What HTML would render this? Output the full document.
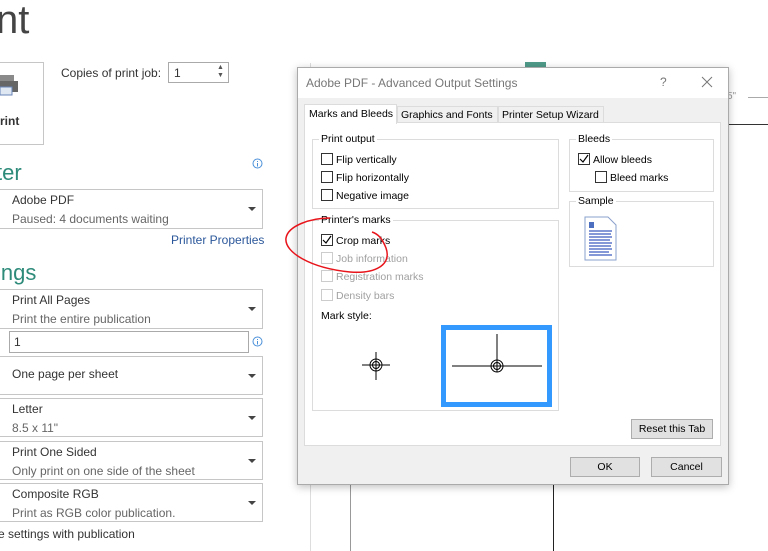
<!DOCTYPE html>
<html><head><style>
*{box-sizing:border-box;margin:0;padding:0}
body{width:768px;height:551px;overflow:hidden;background:#fff;font-family:"Liberation Sans",sans-serif;font-size:12px;color:#333;position:relative}
.a{position:absolute}
.dd{position:absolute;left:-2px;width:265px;border:1px solid #c6c6c6;background:#fff}
.dd .t{position:absolute;left:13px;font-size:12px;color:#333}
.dd .s{color:#666}
.dd .ar{position:absolute;right:6px;top:50%;margin-top:-2px;border-left:4px solid transparent;border-right:4px solid transparent;border-top:4px solid #444}
.teal{color:#2e8b7a;font-size:22px}
.dlg{position:absolute;left:297px;top:67px;width:432px;height:418px;background:#f0f0f0;border:1px solid #aaa;box-shadow:0 2px 8px rgba(0,0,0,.25);font-size:10.5px;color:#000}
.dlg div{white-space:nowrap}
.gb{position:absolute;border:1px solid #dcdcdc}
.gb .lg{position:absolute;top:-7px;left:6px;background:#fff;padding:0 2px;font-size:10.5px}
.cb{position:absolute;left:8px;font-size:10.5px;white-space:nowrap}
.cb i{display:inline-block;width:12px;height:12px;border:1px solid #333;background:#fff;vertical-align:-2px;margin-right:3px;position:relative}
.cb.dis{color:#a0a0a0}.cb.dis i{border-color:#ccc}
.btn{position:absolute;border:1px solid #adadad;background:#e1e1e1;text-align:center;font-size:10.5px;line-height:18px}
</style></head><body>
<div class="a" style="left:310px;top:63px;width:1px;height:488px;background:#ddd"></div>
<div class="a" style="left:350px;top:484px;width:1px;height:67px;background:#999"></div>
<div class="a" style="left:553px;top:484px;width:1px;height:67px;background:#222"></div>
<div class="a" style="left:728px;top:124px;width:40px;height:1px;background:#333"></div>
<div class="a" style="left:748px;top:97px;width:20px;height:1px;background:#aaa"></div>
<div class="a" style="left:727px;top:91px;font-size:10px;color:#999">5"</div>
<div class="a" style="left:525px;top:62px;width:21px;height:6px;background:#4f9a8a"></div>

<div class="a" style="left:-4px;top:-2px;font-size:40px;color:#444">nt</div>
<div class="a" style="left:-2px;top:62px;width:46px;height:83px;border:1px solid #c6c6c6;background:#fff"></div>
<svg class="a" style="left:0;top:72px" width="20" height="30"><rect x="0" y="3" width="14" height="6" fill="#8a8a8a"/><rect x="0" y="9" width="18" height="11" fill="#666"/><rect x="0" y="15" width="12" height="8" fill="#dfe7f2" stroke="#6a86b8"/></svg>
<div class="a" style="left:0;top:114px;font-size:12px;font-weight:bold">rint</div>
<div class="a" style="left:61px;top:66px;font-size:12px">Copies of print job:</div>
<div class="a" style="left:168px;top:62px;width:61px;height:21px;border:1px solid #aaa;background:#fff;font-size:12px;padding:3px 5px">1</div>
<div class="a" style="left:217px;top:64px;font-size:7px;color:#555;line-height:8px">▲<br>▼</div>
<div class="a teal" style="left:-4px;top:160px">ter</div>
<svg class="a" style="left:252px;top:158px" width="11" height="11"><circle cx="5.5" cy="5.5" r="4.5" fill="none" stroke="#4a90d9"/><rect x="5" y="5" width="1" height="3.5" fill="#4a90d9"/><rect x="5" y="3" width="1" height="1" fill="#4a90d9"/></svg>
<div class="dd" style="top:189px;height:40px"><div class="t" style="top:3px">Adobe PDF</div><div class="t s" style="top:22px">Paused: 4 documents waiting</div><div class="ar"></div></div>
<div class="a" style="left:171px;top:233px;color:#2b579a;font-size:12px">Printer Properties</div>
<div class="a teal" style="left:-4px;top:260px">ings</div>
<div class="dd" style="top:289px;height:40px"><div class="t" style="top:3px">Print All Pages</div><div class="t s" style="top:22px">Print the entire publication</div><div class="ar"></div></div>
<div class="a" style="left:9px;top:331px;width:240px;height:22px;border:1px solid #aaa;background:#fff;padding:3px 4px">1</div>
<svg class="a" style="left:252px;top:336px" width="11" height="11"><circle cx="5.5" cy="5.5" r="4.5" fill="none" stroke="#4a90d9"/><rect x="5" y="5" width="1" height="3.5" fill="#4a90d9"/><rect x="5" y="3" width="1" height="1" fill="#4a90d9"/></svg>
<div class="dd" style="top:356px;height:39px"><div class="t" style="top:10px">One page per sheet</div><div class="ar"></div></div>
<div class="dd" style="top:398px;height:39px"><div class="t" style="top:3px">Letter</div><div class="t s" style="top:22px">8.5 x 11"</div><div class="ar"></div></div>
<div class="dd" style="top:441px;height:39px"><div class="t" style="top:3px">Print One Sided</div><div class="t s" style="top:22px">Only print on one side of the sheet</div><div class="ar"></div></div>
<div class="dd" style="top:483px;height:39px"><div class="t" style="top:3px">Composite RGB</div><div class="t s" style="top:22px">Print as RGB color publication.</div><div class="ar"></div></div>
<div class="a" style="left:-2px;top:527px">e settings with publication</div>

<div class="dlg">
 <div class="a" style="left:0;top:0;width:430px;height:30px;background:#fff"></div>
 <div class="a" style="left:8px;top:8px;font-size:12px;color:#777">Adobe PDF - Advanced Output Settings</div>
 <div class="a" style="left:362px;top:7px;font-size:12px;color:#777">?</div>
 <svg class="a" style="left:403px;top:8px" width="12" height="12"><path d="M1 1L11 11M11 1L1 11" stroke="#777" stroke-width="1"/></svg>
 <div class="a" style="left:6px;top:54px;width:417px;height:324px;background:#fff;border:1px solid #dcdcdc"></div>
 <div class="a" style="left:6px;top:36px;width:93px;height:20px;background:#fff;border:1px solid #dcdcdc;border-bottom:none;padding:3px 4px">Marks and Bleeds</div>
 <div class="a" style="left:99px;top:38px;width:101px;height:17px;border:1px solid #dcdcdc;padding:2px 3px">Graphics and Fonts</div>
 <div class="a" style="left:200px;top:38px;width:106px;height:17px;border:1px solid #dcdcdc;padding:2px 3px">Printer Setup Wizard</div>

 <div class="gb" style="left:14px;top:71px;width:247px;height:70px;"><span class="lg">Print output</span>
  <div class="cb" style="top:13px"><i></i>Flip vertically</div>
  <div class="cb" style="top:31px"><i></i>Flip horizontally</div>
  <div class="cb" style="top:49px"><i></i>Negative image</div>
 </div>
 <div class="gb" style="left:14px;top:152px;width:247px;height:191px"><span class="lg">Printer's marks</span>
  <div class="cb" style="top:13px"><i><svg width="10" height="10" style="position:absolute;left:0;top:0"><path d="M1 5 L4 8 L9 1" stroke="#000" fill="none" stroke-width="1.2"/></svg></i>Crop marks</div>
  <div class="cb dis" style="top:31px"><i></i>Job information</div>
  <div class="cb dis" style="top:49px"><i></i>Registration marks</div>
  <div class="cb dis" style="top:68px"><i></i>Density bars</div>
  <div class="a" style="left:8px;top:89px">Mark style:</div>
  <svg class="a" style="left:48px;top:130px" width="32" height="32"><path d="M1 14H29M15 1V29" stroke="#000"/><circle cx="15" cy="14" r="6" fill="none" stroke="#000"/><circle cx="15" cy="14" r="3.5" fill="none" stroke="#000"/></svg>
  <div class="a" style="left:128px;top:104px;width:111px;height:82px;border:5px solid #3399ff;background:#fff"></div>
  <svg class="a" style="left:133px;top:109px" width="101" height="72"><path d="M6 36H96M51 4V42" stroke="#000"/><circle cx="51" cy="36" r="6" fill="none" stroke="#000"/><circle cx="51" cy="36" r="3.5" fill="none" stroke="#000"/></svg>
 </div>
 <div class="gb" style="left:271px;top:71px;width:145px;height:53px"><span class="lg">Bleeds</span>
  <div class="cb" style="top:13px"><i><svg width="10" height="10" style="position:absolute;left:0;top:0"><path d="M1 5 L4 8 L9 1" stroke="#000" fill="none" stroke-width="1.2"/></svg></i>Allow bleeds</div>
  <div class="cb" style="top:31px;left:25px"><i></i>Bleed marks</div>
 </div>
 <div class="gb" style="left:271px;top:133px;width:145px;height:66px"><span class="lg">Sample</span>
  <svg class="a" style="left:14px;top:14px" width="34" height="46"><path d="M1 1H24L32 9V44H1Z" fill="#fff" stroke="#8aa0cc"/><rect x="5" y="6" width="5" height="6" fill="#4d6fbf"/><g stroke="#3b5bbf" stroke-width="1.3"><path d="M5 15H28M5 18H27M5 21H28M5 24H26M5 27H28M5 30H27M5 33H28M5 36H25M5 39H28"/></g></svg>
 </div>
 <div class="btn" style="left:333px;top:351px;width:82px;height:20px">Reset this Tab</div>
 <div class="btn" style="left:272px;top:389px;width:70px;height:20px">OK</div>
 <div class="btn" style="left:353px;top:389px;width:71px;height:20px">Cancel</div>
</div>
<svg class="a" style="left:280px;top:210px" width="120" height="70"><path d="M50 8 C30 8 8 16 6 28 C4 42 30 58 70 62 C95 64 112 55 106 38 C102 28 98 24 92 22" fill="none" stroke="#e8141b" stroke-width="1.5"/></svg>
</body></html>
